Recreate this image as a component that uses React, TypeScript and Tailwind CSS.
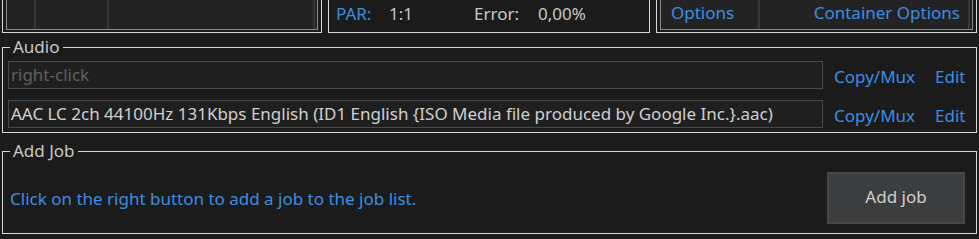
import React from "react";

const font = { fontFamily: '"Noto Sans", "Open Sans", sans-serif' };

export default function App() {
  return (
    <div className="w-[979px] h-[239px] bg-[#1b1b1b] overflow-hidden text-[17px] leading-none" style={font}>
      {/* top row */}
      <div className="flex h-[33px] pl-[2px] pr-[2px] gap-[6px]">
        {/* left panel */}
        <div className="w-[320px] h-[33px] border-x border-b border-[#d8d8d8] px-[3px] pb-[2px]">
          <div className="h-full border-x border-b border-[#8a8a8a] bg-[#232323] flex">
            <div className="w-[29px] border-r-2 border-[#383838]" />
            <div className="w-[73px] border-r-2 border-[#383838]" />
            <div className="flex-1 border-r-2 border-[#383838] mr-[2px]" />
          </div>
        </div>
        {/* middle panel */}
        <div className="w-[322px] h-[33px] border-x border-b border-[#d8d8d8] flex items-center pl-[7px] pb-[6px]">
          <span className="text-[#3d8ee0] w-[53px]">PAR:</span>
          <span className="text-[#c8c8c8] w-[85px]">1:1</span>
          <span className="text-[#c8c8c8] w-[64px]">Error:</span>
          <span className="text-[#c8c8c8]">0,00%</span>
        </div>
        {/* right panel */}
        <div className="flex-1 h-[33px] border-x border-b border-[#d8d8d8] px-[3px] pb-[2px]">
          <div className="h-full border-x border-b border-[#8a8a8a] bg-[#232323] flex items-center">
            <div className="w-[99px] h-full border-r-2 border-[#383838] flex items-center pl-[10px] text-[#3d8ee0] pb-[4px]">
              Options
            </div>
            <div className="flex-1 h-full border-r-2 border-[#383838] mr-[2px] flex items-center justify-end pr-[8px] text-[#3d8ee0] pb-[4px]">
              Container Options
            </div>
          </div>
        </div>
      </div>

      {/* Audio group */}
      <fieldset className="mx-[2px] mt-[6px] h-[94px] border border-[#d8d8d8] px-[5px] pt-[6px] m-0">
        <legend className="ml-[2px] px-[3px] text-[#c8c8c8] leading-[16px]">Audio</legend>
        <div className="flex flex-col gap-[11px]">
          <div className="flex items-center">
            <div className="w-[815px] h-[28px] border border-[#484848] bg-[#1f1f1f] flex items-center pl-[2px] text-[#606060] pb-[1px]">
              right-click
            </div>
            <span className="ml-[11px] w-[101px] text-[#3d8ee0] pt-[3px]">Copy/Mux</span>
            <span className="text-[#3d8ee0] pt-[3px]">Edit</span>
          </div>
          <div className="flex items-center">
            <div className="w-[815px] h-[28px] border border-[#484848] bg-[#1f1f1f] flex items-center pl-[2px] text-[#d0d0d0] pb-[1px] whitespace-nowrap overflow-hidden">
              AAC LC 2ch 44100Hz 131Kbps English (ID1 English {"{"}ISO Media file produced by Google Inc.{"}"}.aac)
            </div>
            <span className="ml-[11px] w-[101px] text-[#3d8ee0] pt-[3px]">Copy/Mux</span>
            <span className="text-[#3d8ee0] pt-[3px]">Edit</span>
          </div>
        </div>
      </fieldset>

      {/* Add Job group */}
      <fieldset className="mx-[2px] mt-[10px] h-[91px] border border-[#d8d8d8] pl-[7px] pr-[11px] m-0">
        <legend className="ml-0 px-[3px] text-[#c8c8c8] leading-[16px]">Add Job</legend>
        <div className="flex items-center justify-between pt-[13px]">
          <span className="text-[#3d8ee0]">Click on the right button to add a job to the job list.</span>
          <button className="w-[138px] h-[52px] bg-[#3c3d3e] border-2 border-[#474747] text-[#d0d0d0] pb-[3px]">
            Add job
          </button>
        </div>
      </fieldset>
    </div>
  );
}
